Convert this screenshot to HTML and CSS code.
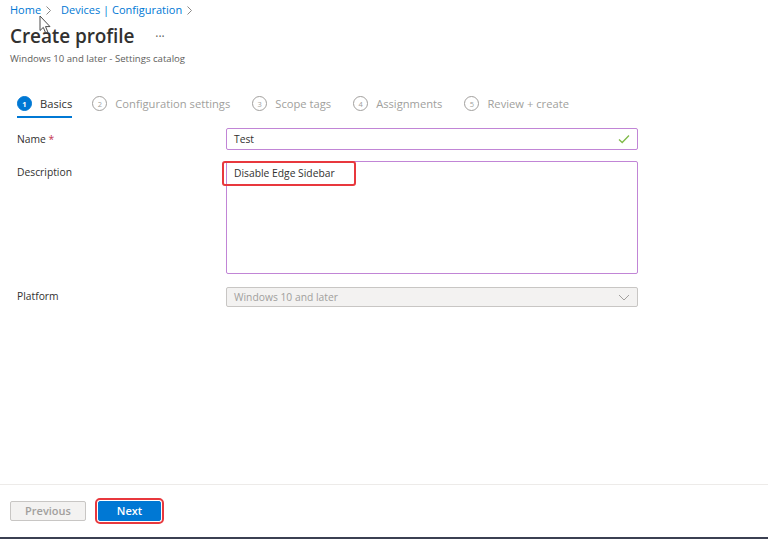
FILE: index.html
```html
<!DOCTYPE html>
<html>
<head>
<meta charset="utf-8">
<link rel="stylesheet" href="styles.css">
</head>
<body>
<div class="page">
  <div class="main">
    <nav class="breadcrumb">
      <a class="crumb">Home</a>
      <svg class="sep" width="5" height="9" viewBox="0 0 5 9"><path d="M0.5 0.5 L4.5 4.5 L0.5 8.5" fill="none" stroke="#8a8886" stroke-width="1"/></svg>
      <a class="crumb">Devices | Configuration</a>
      <svg class="sep" width="5" height="9" viewBox="0 0 5 9"><path d="M0.5 0.5 L4.5 4.5 L0.5 8.5" fill="none" stroke="#8a8886" stroke-width="1"/></svg>
    </nav>
    <div class="title-row">
      <h1 class="title">Create profile</h1>
      <span class="more">&middot;&middot;&middot;</span>
    </div>
    <div class="subtitle">Windows 10 and later - Settings catalog</div>

    <div class="tabs">
      <div class="tab active"><span class="num">1</span><span class="label">Basics</span></div>
      <div class="tab"><span class="num">2</span><span class="label">Configuration settings</span></div>
      <div class="tab"><span class="num">3</span><span class="label">Scope tags</span></div>
      <div class="tab"><span class="num">4</span><span class="label">Assignments</span></div>
      <div class="tab"><span class="num">5</span><span class="label">Review + create</span></div>
    </div>

    <div class="form">
      <div class="flabel">Name <span class="req">*</span></div>
      <div class="input">
        <span>Test</span>
        <svg class="check" width="12" height="10" viewBox="0 0 12 10"><path d="M1 5.5 L4.2 8.5 L11 1.5" fill="none" stroke="#7fba48" stroke-width="1.3"/></svg>
      </div>

      <div class="flabel">Description</div>
      <div class="textarea">
        <span class="desc">Disable Edge Sidebar</span>
      </div>

      <div class="flabel">Platform</div>
      <div class="select">
        <span>Windows 10 and later</span>
        <svg class="chev" width="12" height="7" viewBox="0 0 12 7"><path d="M1 1 L6 6 L11 1" fill="none" stroke="#a19f9d" stroke-width="1"/></svg>
      </div>
    </div>
  </div>

  <div class="footer">
    <button class="btn prev">Previous</button>
    <button class="btn next">Next</button>
  </div>
  <div class="bottombar"></div>

  <svg class="cursor" width="13" height="20" viewBox="0 0 13 20"><path d="M1 1 L1 15.5 L4.3 12.4 L6.6 17.8 L8.8 16.9 L6.5 11.6 L11 11.6 Z" fill="#ffffff" stroke="#4a4a4a" stroke-width="1" stroke-linejoin="round"/></svg>
</div>
</body>
</html>
```

FILE: styles.css
```css
* { box-sizing: border-box; }
html, body { margin: 0; padding: 0; }
body {
  font-family: "Open Sans", "Noto Sans", sans-serif;
  color: #323130;
  background: #ffffff;
  width: 768px;
  height: 539px;
  overflow: hidden;
}
.page {
  position: relative;
  height: 539px;
  display: flex;
  flex-direction: column;
}
.main { flex: 1; }
.breadcrumb {
  height: 20px;
  line-height: 20px;
  padding-left: 10px;
  font-size: 11px;
  display: flex;
  align-items: center;
}
.crumb { color: #0078d4; }
.sep { margin: 0 10px 0 5px; }
.title-row {
  display: flex;
  align-items: center;
  height: 33px;
  padding-left: 10px;
}
.title {
  margin: 0;
  font-size: 19px;
  font-weight: 600;
  line-height: 33px;
  letter-spacing: -0.1px;
}
.more {
  margin-left: 21px;
  color: #605e5c;
  font-size: 12px;
}
.subtitle {
  padding-left: 10px;
  font-size: 9.6px;
  color: #605e5c;
  line-height: 12px;
}
.tabs {
  display: flex;
  margin-top: 28px;
  padding-left: 17px;
  gap: 22px;
}
.tab {
  display: flex;
  align-items: center;
  height: 25px;
  padding-bottom: 2px;
  border-bottom: 2px solid transparent;
  color: #a19f9d;
  font-size: 11.2px;
}
.tab.active {
  border-bottom-color: #0078d4;
  color: #323130;
  margin-right: -2px;
}
.num {
  width: 15px;
  height: 15px;
  border-radius: 50%;
  border: 1px solid #a19f9d;
  font-size: 7.5px;
  display: flex;
  align-items: center;
  justify-content: center;
  margin-right: 8px;
}
.tab.active .num {
  background: #0078d4;
  border-color: #0078d4;
  color: #fff;
  font-weight: 700;
}
.form {
  display: grid;
  grid-template-columns: 209px 412px;
  row-gap: 11px;
  padding-left: 17px;
  margin-top: 10px;
  font-size: 10.3px;
}
.flabel {
  line-height: 22px;
  color: #323130;
}
.req { color: #c4314b; }
.input, .textarea, .select {
  border: 1px solid #c185d6;
  border-radius: 2px;
  padding: 0 7px;
}
.input {
  height: 22px;
  display: flex;
  align-items: center;
  justify-content: space-between;
}
.textarea {
  height: 113px;
  padding-top: 3px;
}
.desc {
  display: inline-block;
  line-height: 16px;
  position: relative;
}
.desc::after {
  content: "";
  position: absolute;
  left: -12px;
  top: -4px;
  right: -21px;
  bottom: -5px;
  border: 2px solid #e8383d;
  border-radius: 3px;
}
.select {
  height: 20px;
  background: #f3f2f1;
  border-color: #c8c6c4;
  color: #a19f9d;
  display: flex;
  align-items: center;
  justify-content: space-between;
  margin-top: 2px;
}
.footer {
  height: 53px;
  border-top: 1px solid #edebe9;
  display: flex;
  align-items: flex-start;
  padding: 16px 0 0 10px;
  gap: 12px;
}
.btn {
  font-family: "Open Sans", "Noto Sans", sans-serif;
  font-size: 11px;
  font-weight: 600;
  height: 20px;
  border-radius: 2px;
  padding: 0;
  line-height: 18px;
}
.prev {
  width: 76px;
  background: #f3f2f1;
  border: 1px solid #c8c6c4;
  color: #a19f9d;
}
.next {
  width: 63px;
  background: #0078d4;
  border: 1px solid #0078d4;
  color: #ffffff;
  outline: 2px solid #e8383d;
  outline-offset: 1px;
}
.bottombar {
  height: 2px;
  background: #3b4052;
}
.cursor {
  position: absolute;
  left: 39px;
  top: 15px;
}
```
